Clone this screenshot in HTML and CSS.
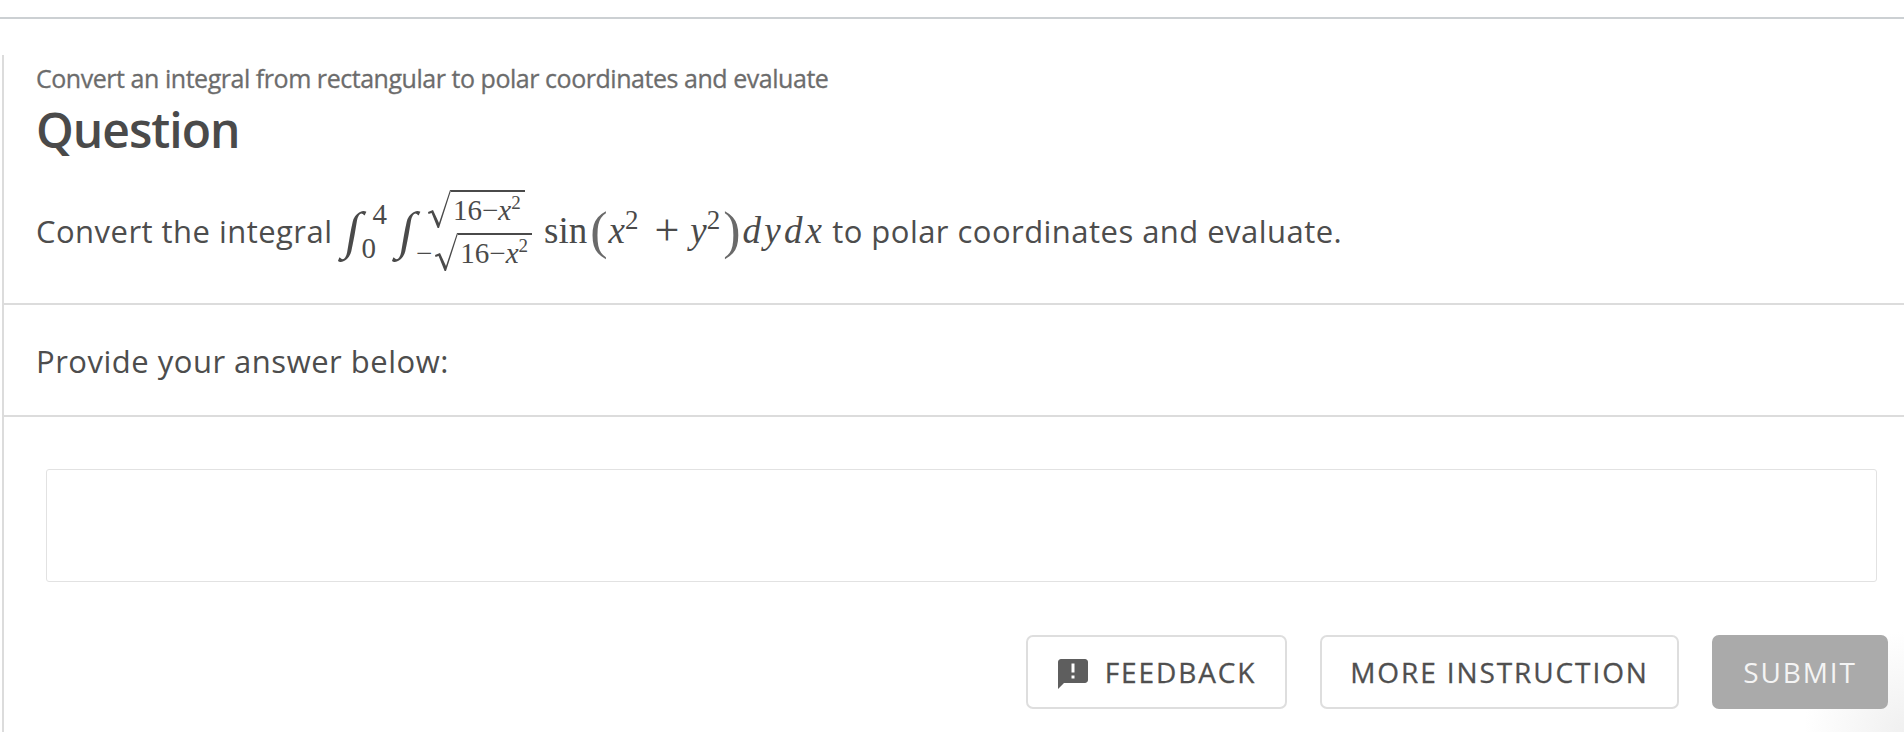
FILE: index.html
```html
<!DOCTYPE html>
<html lang="en">
<head>
    <meta charset="UTF-8">
    <meta name="viewport" content="width=device-width, initial-scale=1.0">
    <title>Question</title>
    <link rel="stylesheet" href="styles.css">
</head>
<body>

<div class="topbar"></div>

<div class="panel">
    <div class="heading">
        <div class="subject">Convert an integral from rectangular to polar coordinates and evaluate</div>
        <h1 class="title">Question</h1>
    </div>

    <div class="question">
        <span>Convert the integral</span>
        <span class="math">
            <span class="int">∫</span>
            <span class="limits first">
                <span class="up">4</span>
                <span class="down">0</span>
            </span>
            <span class="int second">∫</span>
            <span class="limits">
                <span class="root-line upper">
                    <svg class="radical" viewBox="0 0 24 38" preserveAspectRatio="none"><path d="M1 22l5-2 6 13L23 0h1.200L12 38h-1.400L4.600 23 1.500 24z"/></svg><span class="radicand">16−<i>x</i><sup>2</sup></span>
                </span>
                <span class="root-line lower">
                    <span class="minus">−</span><svg class="radical" viewBox="0 0 24 38" preserveAspectRatio="none"><path d="M1 22l5-2 6 13L23 0h1.200L12 38h-1.400L4.600 23 1.500 24z"/></svg><span class="radicand">16−<i>x</i><sup>2</sup></span>
                </span>
            </span>
            <span class="expr">sin<span class="paren">(</span><i class="var">x</i><sup>2</sup><span class="plus">+</span><i class="var">y</i><sup>2</sup><span class="paren">)</span><i class="diff">dydx</i></span>
        </span>
        <span>to polar coordinates and evaluate.</span>
    </div>

    <div class="prompt">Provide your answer below:</div>

    <div class="answer">
        <div class="answer-box"></div>
    </div>

    <div class="buttons">
        <button type="button" class="btn feedback">
            <svg class="icon" viewBox="0 0 24 24"><path d="M20 2H4c-1.100 0-1.990.9-1.990 2L2 22l4-4h14c1.100 0 2-.9 2-2V4c0-1.100-.9-2-2-2zm-7 9h-2V5h2v6zm0 4h-2v-2h2v2z"/></svg>
            FEEDBACK
        </button>
        <button type="button" class="btn more">MORE INSTRUCTION</button>
        <button type="button" class="btn submit">SUBMIT</button>
    </div>
</div>

</body>
</html>
```

FILE: styles.css
```css
html, body {
    height: 100%;
}
body {
    margin: 0;
    overflow: hidden;
    font-family: "Open Sans", sans-serif;
    color: #4d4d4d;
    background: radial-gradient(circle at 100% 100%, #f0f0f0, #fff 100px) no-repeat;
}
.topbar {
    height: 17px;
    border-bottom: 2px solid #ccd0d3;
}
.panel {
    margin: 36px 0 0 2px;
    padding-bottom: 23px;
    border-left: 2px solid #dcdcdc;
}
.heading {
    padding: 6px 0 0 32px;
}
.subject {
    font-size: 25px;
    line-height: 34px;
    letter-spacing: -0.46px;
    color: #6c6c6c;
    -webkit-text-stroke: 0.3px #6c6c6c;
}
.title {
    margin: 2px 0 0;
    font-size: 48px;
    font-weight: 600;
    line-height: 66px;
    letter-spacing: -1px;
    color: #4a4a4a;
}
.question {
    display: flex;
    align-items: center;
    gap: 10px;
    height: 135px;
    padding: 0 0 5px 32px;
    border-bottom: 2px solid #dcdcdc;
    font-size: 31px;
    letter-spacing: 0.46px;
}
.math {
    display: inline-flex;
    align-items: center;
    margin-left: 4px;
    font-family: "Liberation Serif", serif;
    letter-spacing: 0;
    color: #4a4a4a;
}
.int {
    width: 15px;
    font-size: 52px;
    font-style: italic;
    line-height: 56px;
    transform: skewX(-10deg);
}
.int.second {
    width: 16px;
    margin-left: 13px;
}
.limits {
    display: flex;
    flex-direction: column;
    font-size: 29px;
    line-height: 30px;
}
.limits.first {
    gap: 4px;
}
.limits.first .up {
    margin-left: 11px;
}
.root-line {
    display: flex;
    align-items: flex-start;
    height: 38px;
}
.root-line.upper {
    margin: 0 0 5px 11px;
}
.radical {
    width: 24px;
    height: 38px;
    fill: #4a4a4a;
    flex: none;
}
.radicand {
    border-top: 2px solid #4a4a4a;
    padding: 0 4px 0 2px;
    white-space: nowrap;
    line-height: 36px;
}
.radicand sup {
    font-size: 19px;
    line-height: 0;
}
.minus {
    line-height: 40px;
    margin-right: 2px;
}
.expr {
    display: inline-flex;
    align-items: center;
    margin-left: 12px;
    font-size: 37px;
    white-space: nowrap;
}
.expr sup {
    font-size: 27px;
    line-height: 0;
    margin-top: -22px;
}
.plus {
    margin: 0 11px 0 16px;
    font-size: 44px;
}
.paren {
    margin: 0 1px 0 3px;
    font-size: 52px;
    line-height: 52px;
    color: #6a6a6a;
}
.diff {
    margin: 0 -3px 0 1px;
    letter-spacing: 3.2px;
}
.prompt {
    display: flex;
    align-items: center;
    box-sizing: border-box;
    height: 112px;
    padding: 2px 0 0 32px;
    border-bottom: 2px solid #dcdcdc;
    font-size: 31px;
    letter-spacing: 0.5px;
}
.answer {
    padding: 52px 27px 0 42px;
}
.answer-box {
    height: 111px;
    border: 1px solid #e2e2e2;
    border-radius: 3px;
}
.buttons {
    display: flex;
    justify-content: flex-end;
    gap: 33px;
    margin-top: 53px;
    padding-right: 16px;
}
.btn {
    display: flex;
    align-items: center;
    justify-content: center;
    gap: 14px;
    height: 74px;
    padding: 0;
    border: 2px solid #dedede;
    border-radius: 7px;
    background: #fff;
    font-family: inherit;
    font-size: 28px;
    letter-spacing: 1.9px;
    color: #4f4f4f;
    -webkit-text-stroke: 0.3px #4f4f4f;
}
.feedback {
    width: 261px;
    padding-right: 2px;
}
.more {
    width: 359px;
}
.submit {
    width: 176px;
    border-color: #aaa;
    background: #aaa;
    color: #f4f4f4;
    -webkit-text-stroke: 0;
}
.icon {
    width: 36px;
    height: 36px;
    margin-top: 4px;
    fill: #5e5e5e;
}
```
